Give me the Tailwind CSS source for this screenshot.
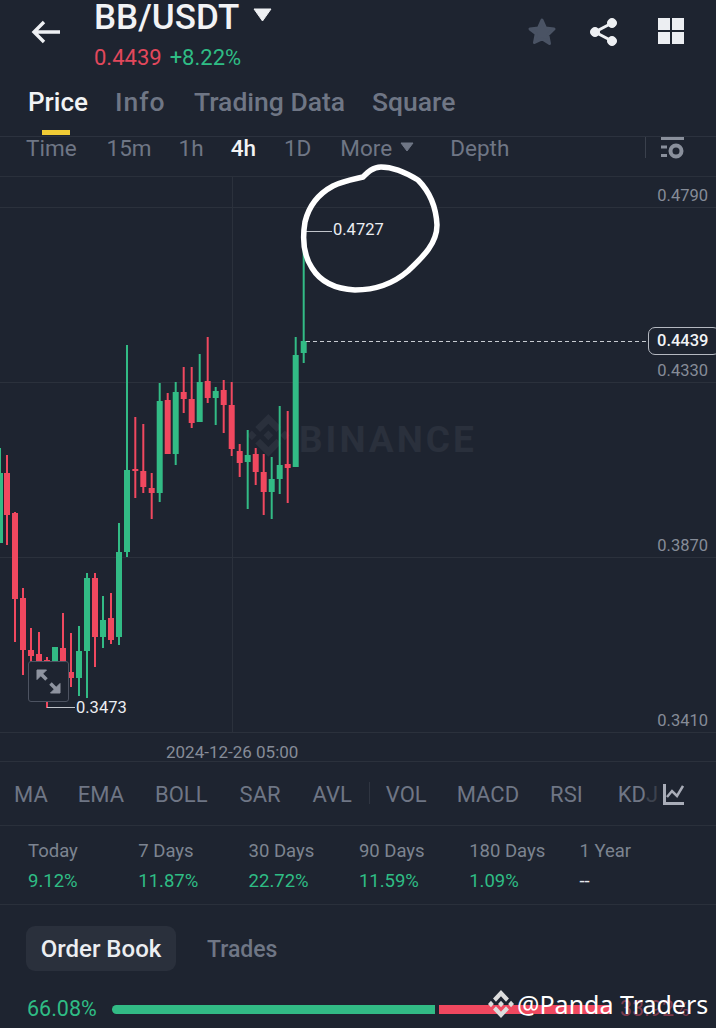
<!DOCTYPE html>
<html lang="en">
<head>
<meta charset="UTF-8">
<meta name="viewport" content="width=device-width, initial-scale=1.0">
<script src="https://cdn.jsdelivr.net/npm/@tailwindcss/browser@4"></script>
<title>BB/USDT</title>
</head>
<body class="bg-[#1e2430]">
<div class="relative w-[716px] h-[1028px] overflow-hidden bg-[#1e2430] [font-family:Roboto,sans-serif]">

  <!-- header -->
  <div class="flex h-[88px]">
    <svg class="ml-[31px] mt-[20px] w-[29px] h-[24px]" viewBox="0 0 29 24" fill="none" stroke="#eef0f3" stroke-width="3.4" stroke-linejoin="miter"><path d="M29 12H3M13 2L3 12l10 10"/></svg>
    <div class="ml-[34px]">
      <div class="flex items-start h-[38px]">
        <span class="text-[35px] leading-[36px] font-medium text-[#f2f3f5] whitespace-nowrap">BB/USDT</span>
        <svg class="ml-[14px] mt-[8px] w-[19px] h-[14px]" viewBox="0 0 19 14"><path d="M1 1h17L9.500 13z" fill="#eef0f3" stroke="#eef0f3" stroke-linejoin="round"/></svg>
      </div>
      <div class="flex gap-[8px] mt-[6px] text-[22px] leading-[28px]">
        <span class="text-[#e2485c]">0.4439</span>
        <span class="text-[#2fbd85]">+8.22%</span>
      </div>
    </div>
    <div class="ml-auto flex items-start mr-[32px] mt-[17px]">
      <svg class="w-[30px] h-[30px]" viewBox="0 0 30 30"><path d="M15 3l3.600 8 8.400 1-6.200 5.800 1.700 8.700L15 21.800l-7.500 3.700 1.700-8.700L3 12l8.400-1z" fill="#4a5364" stroke="#4a5364" stroke-width="3" stroke-linejoin="round"/></svg>
      <svg class="ml-[32px] w-[30px] h-[30px]" viewBox="0 0 30 30" fill="#eef0f3" stroke="#eef0f3"><path d="M23 6L6 15l17 9" fill="none" stroke-width="3"/><circle cx="23" cy="6" r="4.500"/><circle cx="6" cy="15" r="4.500"/><circle cx="23" cy="24" r="4.500"/></svg>
      <div class="ml-[39px] mt-[1px] grid grid-cols-2 gap-[2px]">
        <div class="w-[12px] h-[12px] bg-[#eceef2]"></div>
        <div class="w-[12px] h-[12px] bg-[#eceef2]"></div>
        <div class="w-[12px] h-[12px] bg-[#eceef2]"></div>
        <div class="w-[12px] h-[12px] bg-[#eceef2]"></div>
      </div>
    </div>
  </div>

  <!-- tabs -->
  <div class="flex h-[49px] pl-[28px] border-b border-[#2c323e] text-[26.500px] leading-[28px] font-medium text-[#6f7685] whitespace-nowrap">
    <div class="relative w-[60px] text-[26px] text-[#f2f3f5]">Price<div class="absolute left-[14px] top-[42px] w-[28px] h-[5px] bg-[#f0cb35]"></div></div>
    <div class="ml-[27px] w-[52px] tracking-[1px]">Info</div>
    <div class="ml-[27px] w-[149px]">Trading Data</div>
    <div class="ml-[29px]">Square</div>
  </div>

  <!-- time row -->
  <div class="flex items-start h-[40px] pl-[26px] border-b border-[#2a303b] text-[22.500px] leading-[22px] text-[#6f7685]">
    <div>Time</div>
    <div class="ml-[30px]">15m</div>
    <div class="ml-[27px]">1h</div>
    <div class="ml-[27px] font-medium text-[#f2f3f5]">4h</div>
    <div class="ml-[28px]">1D</div>
    <div class="ml-[29px]">More</div>
    <svg class="ml-[8px] mt-[5px] w-[14px] h-[10px]" viewBox="0 0 14 10"><path d="M1 1h12L7 9z" fill="#6f7685" stroke="#6f7685" stroke-linejoin="round"/></svg>
    <div class="ml-[36px]">Depth</div>
    <div class="ml-auto flex">
      <div class="w-px h-[21px] bg-[#3a404c]"></div>
      <svg class="ml-[15px] mr-[31px] w-[24px] h-[24px]" viewBox="0 0 24 24" fill="#8a909c"><path d="M0 0h23v3H0zM0 8.500h6v3H0zM0 17h6v3H0z"/><circle cx="15" cy="14" r="5.500" fill="none" stroke="#8a909c" stroke-width="4"/></svg>
    </div>
  </div>

  <!-- chart -->
  <div class="relative h-[585px]">
    <svg class="block w-[716px] h-[585px] overflow-visible" viewBox="0 177 716 585" fill="none">
      <path d="M0 207.500H716M0 382.500H716M0 557.500H716M0 732.500H716M232.500 177V732" stroke="#2b313c"/>
      <path d="M0 761.500H716" stroke="#2b313c"/>

      <g transform="translate(247 414) scale(1.780)" fill="#2a303c"><path d="M16.624 13.920l2.717 2.715-7.353 7.353-7.353-7.352 2.717-2.716 4.636 4.659 4.635-4.659zm4.637-4.637L24 12l-2.715 2.716L18.568 12l2.693-2.717zm-9.272.001l2.716 2.692-2.716 2.717L9.272 12l2.717-2.716zm-9.272-.001L5.409 12l-2.692 2.692L0 12l2.717-2.717zM11.989.012l7.353 7.329-2.718 2.715-4.635-4.635-4.636 4.659-2.717-2.715 7.353-7.353z"/></g>
      <text x="299" y="452" class="text-[37px] font-bold tracking-[3px]" fill="#2a303c">BINANCE</text>

      <!-- green wicks -->
      <path stroke="#32bb85" stroke-width="2" d="M0 448V543M79 626V696M87 573V698M103 596V648M119 523V645M127 345V557M159.700 383V502M175.700 382V465M199.700 354V422M215.700 387V425M247.700 430V509M271.700 457V519M279.700 406V494M295.700 337V467M303.700 232V363"/>
      <!-- red wicks -->
      <path stroke="#f0485f" stroke-width="2" d="M7 455V545M15 512V642M23 588V675M31 628V680M39 632V680M47 657V708M63 613V680M71 633V687M95 573V667M111 593V644M135.300 417V498M143.300 424V493M151.700 473V519M167.700 393V454M183.700 367V413M191.700 367V428M207.700 337V403M223.700 380V433M231.700 382V456M239.700 444V477M255.700 448V485M263.700 454V515M287.700 411V503"/>
      <!-- green bodies -->
      <path stroke="#32bb85" stroke-width="6" d="M0 473V543M55 647V680M79 651V678M87 578V651M103 620V637M119 552V637M127 470V552M159.700 401V493M175.700 392V454M199.700 382V422M215.700 391V398M247.700 455V462M271.700 479V492M279.700 465V479M295.700 355V467M303.700 341V353"/>
      <!-- red bodies -->
      <path stroke="#f0485f" stroke-width="6" d="M7 473V515M15 513V599M23 598V650M31 650V656M39 654V662M47 660V672M63 648V680M71 672V678M95 578V637M111 618V640M135.300 469V471M143.300 471V487M151.700 488V493M167.700 400V454M183.700 392V399M191.700 399V423M207.700 381V398M223.700 390V405M231.700 405V449M239.700 451V463M255.700 454V472M263.700 472V492M287.700 464V468"/>

      <!-- price line -->
      <path d="M306 341.500H648" stroke="#c8ccd2" stroke-dasharray="4 3"/>
      <path d="M306 231.500H332" stroke="#c0c4ca"/>
      <path d="M47 703V707.500" stroke="#f0485f" stroke-width="2"/>
      <path d="M47 707.500H75" stroke="#c0c4ca"/>
      <text x="333" y="235" class="text-[16.500px]" fill="#eceef2">0.4727</text>
      <text x="76" y="713" class="text-[16.500px]" fill="#eceef2">0.3473</text>

      <!-- axis -->
      <g class="text-[16.500px]" fill="#868c98" text-anchor="end">
        <text x="708" y="201">0.4790</text>
        <text x="708" y="376">0.4330</text>
        <text x="708" y="551">0.3870</text>
        <text x="708" y="726">0.3410</text>
      </g>
      <text x="166" y="758" class="text-[17px]" fill="#868c98">2024-12-26 05:00</text>

      <!-- hand drawn circle -->
      <path d="M363 177C368 172 373 167 381 167C392 167 405 172 418 180C428 190 436 205 437 225C437 243 424 256 408 271C394 283 375 290 355 290C335 289 320 281 312 268C304 256 302 240 305 222C309 205 320 193 333 186C343 181 355 179 363 177Z" stroke="#ffffff" stroke-width="5.500" stroke-linejoin="round"/>
    </svg>

    <!-- last price tag -->
    <div class="absolute left-[648px] top-[150px] w-[72px] h-[28px] rounded-[7px] border border-[#b4b8c0] bg-[#1e2430] pl-[8px] text-[16.500px] leading-[26px] font-medium text-[#f2f3f5]">0.4439</div>

    <!-- expand button -->
    <div class="absolute left-[28px] top-[484px] w-[41px] h-[41px] rounded-[3px] border border-[#4d5361] bg-[#1e2430]">
      <svg class="w-[39px] h-[39px]" viewBox="0 0 39 39" fill="#8f94a0" stroke="#8f94a0"><path d="M8 8h9.500L8 17.500z"/><path d="M31 31H21.500L31 21.500z"/><path d="M11 11l6.500 6.500M28 28l-6.500-6.500" stroke-width="3.500"/></svg>
    </div>
  </div>

  <!-- indicators -->
  <div class="relative flex items-start h-[64px] pl-[14px] pt-[20px] border-b border-[#2a303b] text-[22px] leading-[26px] text-[#6f7685] whitespace-nowrap">
    <div>MA</div>
    <div class="ml-[30px]">EMA</div>
    <div class="ml-[31px]">BOLL</div>
    <div class="ml-[32px]">SAR</div>
    <div class="ml-[32px]">AVL</div>
    <div class="ml-[17px] w-px h-[22px] bg-[#2f3541]"></div>
    <div class="ml-[16px]">VOL</div>
    <div class="ml-[30px]">MACD</div>
    <div class="ml-[31px]">RSI</div>
    <div class="ml-[35px]">KD<span class="text-[#3c424e]">J</span></div>
    <svg class="absolute left-[663px] top-[22px] w-[21px] h-[21px]" viewBox="0 0 21 21" fill="none" stroke="#a9adb8" stroke-width="3"><path d="M1.500 0V19.500H21"/><path d="M4 13l5-6 5 5 6-10" stroke-width="2.500"/></svg>
  </div>

  <!-- change stats -->
  <div class="grid grid-cols-[repeat(6,110.300px)] h-[79px] pl-[28px] pt-[12px] border-b border-[#2a303b] text-[18.500px] leading-[26px]">
    <div><div class="text-[#7d8491]">Today</div><div class="mt-[4px] text-[#2fbd85]">9.12%</div></div>
    <div><div class="text-[#7d8491]">7 Days</div><div class="mt-[4px] text-[#2fbd85]">11.87%</div></div>
    <div><div class="text-[#7d8491]">30 Days</div><div class="mt-[4px] text-[#2fbd85]">22.72%</div></div>
    <div><div class="text-[#7d8491]">90 Days</div><div class="mt-[4px] text-[#2fbd85]">11.59%</div></div>
    <div><div class="text-[#7d8491]">180 Days</div><div class="mt-[4px] text-[#2fbd85]">1.09%</div></div>
    <div><div class="text-[#7d8491]">1 Year</div><div class="mt-[4px] text-[#e6e8ec]">--</div></div>
  </div>

  <!-- order book -->
  <div class="flex items-center gap-[31px] mt-[21px] ml-[26px] text-[24px] leading-[47px] font-medium">
    <div class="w-[150px] h-[45px] rounded-[9px] bg-[#2a303c] text-center text-[#eceef2]">Order Book</div>
    <div class="h-[45px] text-[23px] text-[#6f7685]">Trades</div>
  </div>
  <div class="relative flex items-center mt-[25px] pl-[27px] h-[26px]">
    <span class="w-[85px] text-[21.500px] leading-[26px] text-[#2fbd85]">66.08%</span>
    <div class="w-[323px] h-[9px] rounded-l-full bg-[#32bb85]"></div>
    <div class="ml-[4px] w-[172px] h-[9px] bg-[#f0485f]"></div>
    <span class="ml-[9px] text-[21.500px] leading-[26px] text-[#7c3a4c]">33.92%</span>
  </div>

  <!-- watermark -->
  <div class="absolute left-[488px] top-[989px] flex items-center gap-[3px]">
    <svg class="w-[26px] h-[28px]" viewBox="0 0 24 24" preserveAspectRatio="none" fill="#dcdcdc"><path d="M16.624 13.920l2.717 2.715-7.353 7.353-7.353-7.352 2.717-2.716 4.636 4.659 4.635-4.659zm4.637-4.637L24 12l-2.715 2.716L18.568 12l2.693-2.717zm-9.272.001l2.716 2.692-2.716 2.717L9.272 12l2.717-2.716zm-9.272-.001L5.409 12l-2.692 2.692L0 12l2.717-2.717zM11.989.012l7.353 7.329-2.718 2.715-4.635-4.635-4.636 4.659-2.717-2.715 7.353-7.353z"/></svg>
    <span class="[font-family:'Noto_Sans',sans-serif] text-[25px] leading-[30px] text-white whitespace-nowrap">@Panda Traders</span>
  </div>
</div>
</body>
</html>
